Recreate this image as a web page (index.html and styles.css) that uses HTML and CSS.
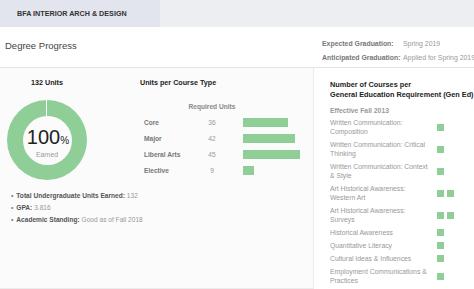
FILE: index.html
```html
<!DOCTYPE html>
<html lang="en">
<head>
  <meta charset="UTF-8" />
  <title>Degree Progress</title>
  <link rel="stylesheet" href="styles.css">
</head>
<body>

  <div class="topbar">
    <div class="tab">BFA INTERIOR ARCH &amp; DESIGN</div>
  </div>

  <div class="header">
    <h1>Degree Progress</h1>
    <div class="grad">
      <div class="grad-row"><span class="grad-label">Expected Graduation:</span><span>Spring 2019</span></div>
      <div class="grad-row"><span class="grad-label">Anticipated Graduation:</span><span>Applied for Spring 2019</span></div>
    </div>
  </div>

  <div class="main">
    <div class="left">
      <div class="left-top">
        <div class="units-col">
          <h3>132 Units</h3>
          <div class="donut">
            <div class="donut-hole">
              <div class="pct">100<span>%</span></div>
              <div class="earned">Earned</div>
            </div>
          </div>
        </div>

        <div class="types-col">
          <h3>Units per Course Type</h3>
          <div class="types">
            <div></div>
            <div class="num head"><span>Required Units</span></div>
            <div></div>

            <div class="type-label">Core</div>
            <div class="num">36</div>
            <div class="bar-cell"><div class="bar" style="width:45px"></div></div>

            <div class="type-label">Major</div>
            <div class="num">42</div>
            <div class="bar-cell"><div class="bar" style="width:52px"></div></div>

            <div class="type-label">Liberal Arts</div>
            <div class="num">45</div>
            <div class="bar-cell"><div class="bar" style="width:57px"></div></div>

            <div class="type-label">Elective</div>
            <div class="num">9</div>
            <div class="bar-cell"><div class="bar" style="width:11px"></div></div>
          </div>
        </div>
      </div>

      <ul class="stats">
        <li><b>Total Undergraduate Units Earned:</b> 132</li>
        <li><b>GPA:</b> 3.816</li>
        <li><b>Academic Standing:</b> Good as of Fall 2018</li>
      </ul>
    </div>

    <div class="right">
      <h3>Number of Courses per<br>General Education Requirement (Gen Ed)</h3>
      <div class="effective">Effective Fall 2013</div>
      <div class="reqs">
        <div class="req"><span class="req-name">Written Communication: Composition</span><span class="boxes"><i></i></span></div>
        <div class="req"><span class="req-name">Written Communication: Critical Thinking</span><span class="boxes"><i></i></span></div>
        <div class="req"><span class="req-name">Written Communication: Context &amp; Style</span><span class="boxes"><i></i></span></div>
        <div class="req"><span class="req-name">Art Historical Awareness: Western Art</span><span class="boxes"><i></i><i></i></span></div>
        <div class="req"><span class="req-name">Art Historical Awareness: Surveys</span><span class="boxes"><i></i><i></i></span></div>
        <div class="req"><span class="req-name">Historical Awareness</span><span class="boxes"><i></i></span></div>
        <div class="req"><span class="req-name">Quantitative Literacy</span><span class="boxes"><i></i></span></div>
        <div class="req"><span class="req-name">Cultural Ideas &amp; Influences</span><span class="boxes"><i></i></span></div>
        <div class="req"><span class="req-name">Employment Communications &amp; Practices</span><span class="boxes"><i></i></span></div>
      </div>
    </div>
  </div>

</body>
</html>
```

FILE: styles.css
```css
* {
  box-sizing: border-box;
  font-family: 'Liberation Sans', Arial, sans-serif;
}

body {
  margin: 0;
  background: #fff;
  color: #333;
  overflow: hidden;
}

.topbar {
  height: 27px;
  background: #eceef2;
  display: flex;
}

.tab {
  width: 160px;
  background: #e2e5ed;
  padding-left: 17px;
  font-size: 7.2px;
  font-weight: bold;
  line-height: 28px;
  color: #333;
}

.header {
  height: 41px;
  display: flex;
  justify-content: space-between;
  border-bottom: 1px solid #e4e4e4;
}

h1 {
  margin: 0;
  padding: 13px 0 0 5px;
  font-size: 9.5px;
  font-weight: normal;
  color: #444;
}

.grad {
  width: 152px;
  padding-top: 10px;
  font-size: 6.9px;
  color: #999;
  white-space: nowrap;
  overflow: hidden;
}

.grad-row {
  display: flex;
  line-height: 14px;
}

.grad-label {
  width: 81px;
  flex-shrink: 0;
  font-weight: bold;
  color: #777;
}

.main {
  display: flex;
  height: 221px;
}

.left {
  width: 314px;
  flex-shrink: 0;
  background: #fbfbfb;
  border-right: 1px solid #ececec;
  border-bottom: 1px solid #ececec;
  padding-top: 10px;
}

.left-top {
  display: flex;
}

h3 {
  margin: 0;
  font-size: 7.2px;
  line-height: 10px;
  color: #222;
}

.units-col {
  width: 94px;
  display: flex;
  flex-direction: column;
  align-items: center;
}

.donut {
  margin-top: 12px;
  width: 80px;
  height: 80px;
  border-radius: 50%;
  background: linear-gradient(to right, transparent 39.5px, #fff 39.5px, #fff 40.5px, transparent 40.5px) top / 100% 16px no-repeat, #8fce96;
  display: flex;
  align-items: center;
  justify-content: center;
}

.donut-hole {
  width: 49px;
  height: 49px;
  border-radius: 50%;
  background: #fbfbfb;
  text-align: center;
  padding-top: 12px;
}

.pct {
  font-size: 20px;
  line-height: 18px;
  color: #222;
  margin-left: 2px;
}

.pct span {
  font-size: 10px;
}

.earned {
  font-size: 6.8px;
  color: #999;
  line-height: 10px;
}

.types-col {
  margin-left: 46px;
}

.types {
  margin-top: 10px;
  margin-left: 4px;
  display: grid;
  grid-template-columns: 50px 36px 80px;
  grid-auto-rows: 16px;
  font-size: 6.6px;
  align-items: center;
}

.type-label {
  font-weight: bold;
  color: #777;
}

.num {
  display: flex;
  justify-content: center;
  color: #999;
  white-space: nowrap;
}

.num.head {
  font-weight: bold;
  color: #888;
}

.bar-cell {
  padding-left: 13px;
}

.bar {
  height: 9px;
  background: #8fce96;
}

.stats {
  list-style: none;
  margin: 10px 0 0;
  padding: 0 0 0 11px;
  font-size: 6.6px;
  color: #999;
}

.stats li {
  line-height: 12px;
}

.stats li::before {
  content: "\2022";
  color: #777;
  margin-right: 3px;
}

.stats b {
  color: #555;
}

.right {
  flex: 1;
  min-width: 0;
  overflow: hidden;
  padding: 12px 0 0 16px;
  white-space: nowrap;
}

.right h3 {
  font-size: 7.3px;
}

.effective {
  margin-top: 6px;
  font-size: 6.8px;
  line-height: 10px;
  font-weight: bold;
  color: #999;
}

.reqs {
  margin-top: 2px;
  display: flex;
  flex-direction: column;
  gap: 4px;
}

.req {
  display: flex;
  align-items: center;
}

.req-name {
  width: 100px;
  flex-shrink: 0;
  white-space: normal;
  font-size: 6.8px;
  line-height: 9px;
  color: #999;
}

.boxes {
  margin-left: 7px;
  display: flex;
  gap: 3px;
}

.boxes i {
  width: 7px;
  height: 7px;
  background: #8fce96;
}
```
